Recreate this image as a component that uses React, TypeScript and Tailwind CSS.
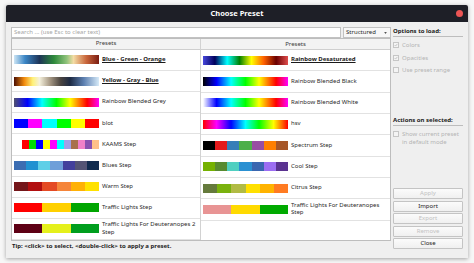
import type { ReactNode } from 'react'

type Preset = {
  name: string
  bold?: boolean
  grad?: string
  steps?: string[]
  narrow?: boolean
}

const leftPresets: Preset[] = [
  {
    name: 'Blue - Green - Orange',
    bold: true,
    grad: 'bg-[linear-gradient(to_right,#cde5f4,#3b86c6_13%,#1d3457_30%,#2e8a3b_47%,#90c37b_62%,#f3dca4_70%,#c9663b_85%,#7a1c12)]',
  },
  {
    name: 'Yellow - Gray - Blue',
    bold: true,
    grad: 'bg-[linear-gradient(to_right,#4a0e02,#f28a0c_12%,#fff27a_22%,#f4f0dc_30%,#a89a86_42%,#4a4440_55%,#1d2a44_66%,#5c7fb0_82%,#d6eaf8)]',
  },
  {
    name: 'Rainbow Blended Grey',
    grad: 'bg-[linear-gradient(to_right,#505070,#0000ff_16%,#00ffff_33%,#00ff00_50%,#ffff00_66%,#ff0000_86%,#ff00ff)]',
  },
  {
    name: 'blot',
    steps: ['bg-[#0000ff]', 'bg-[#ff00ff]', 'bg-[#00ffff]', 'bg-[#00ff00]', 'bg-[#ffff00]', 'bg-[#ff0000]'],
  },
  {
    name: 'KAAMS Step',
    narrow: true,
    steps: [
      'bg-[#ff0000]',
      'bg-[#00e000]',
      'bg-[#0000ff]',
      'bg-[#ffff00]',
      'bg-[#ff00ff]',
      'bg-[#00ffff]',
      'bg-[#a0a0e8]',
      'bg-[#a8704c]',
      'bg-[#f080c8]',
      'bg-[#8a50b0]',
      'bg-[#ffc088]',
    ],
  },
  {
    name: 'Blues Step',
    steps: ['bg-[#3c6db2]', 'bg-[#2191d1]', 'bg-[#5fcfe7]', 'bg-[#6f9fd9]', 'bg-[#43409c]', 'bg-[#545475]', 'bg-[#102a4e]'],
  },
  {
    name: 'Warm Step',
    steps: ['bg-[#74161a]', 'bg-[#b20f10]', 'bg-[#e44a24]', 'bg-[#f5853a]', 'bg-[#ffb106]', 'bg-[#ffe100]'],
  },
  {
    name: 'Traffic Lights Step',
    steps: ['bg-[#ff0000]', 'bg-[#ffd000]', 'bg-[#00a500]'],
  },
  {
    name: 'Traffic Lights For Deuteranopes 2 Step',
    steps: ['bg-[#5e0015]', 'bg-[#e5f01c]', 'bg-[#009e1e]'],
  },
]

const rightPresets: Preset[] = [
  {
    name: 'Rainbow Desaturated',
    bold: true,
    grad: 'bg-[linear-gradient(to_right,#4747db,#00005c_14%,#00ffff_28.5%,#008000_43%,#ffff00_57%,#ff6100_71.5%,#6b0000_86%,#e04d4d)]',
  },
  {
    name: 'Rainbow Blended Black',
    grad: 'bg-[linear-gradient(to_right,#000000,#0000ff_16%,#00ffff_33%,#00ff00_50%,#ffff00_66%,#ff0000_86%,#ff00ff)]',
  },
  {
    name: 'Rainbow Blended White',
    grad: 'bg-[linear-gradient(to_right,#ffffff,#0000ff_16%,#00ffff_33%,#00ff00_50%,#ffff00_66%,#ff0000_86%,#ff00ff)]',
  },
  {
    name: 'hsv',
    grad: 'bg-[linear-gradient(to_right,#ff0000,#ff00ff_16%,#0000ff_33%,#00ffff_50%,#00ff00_66%,#ffff00_83%,#ff0000)]',
  },
  {
    name: 'Spectrum Step',
    steps: ['bg-[#000000]', 'bg-[#e41a1c]', 'bg-[#377eb8]', 'bg-[#4daf4a]', 'bg-[#984ea3]', 'bg-[#ff7f00]', 'bg-[#a65628]'],
  },
  {
    name: 'Cool Step',
    steps: ['bg-[#75b101]', 'bg-[#588a30]', 'bg-[#50cfc0]', 'bg-[#2a90d2]', 'bg-[#3a66b0]', 'bg-[#9c6df2]', 'bg-[#5a3290]'],
  },
  {
    name: 'Citrus Step',
    steps: ['bg-[#657a3c]', 'bg-[#7ab20e]', 'bg-[#b1bb44]', 'bg-[#ffe000]', 'bg-[#ffb300]', 'bg-[#ff7b22]'],
  },
  {
    name: 'Traffic Lights For Deuteranopes Step',
    steps: ['bg-[#e89494]', 'bg-[#ffda00]', 'bg-[#00aa00]'],
  },
]

function Bar({ p }: { p: Preset }) {
  if (p.grad) return <div className={`w-[85px] h-[9px] shrink-0 ${p.grad}`} />
  return (
    <div className="w-[85px] h-[9px] shrink-0 flex justify-end">
      <div className={`flex h-full ${p.narrow ? 'w-[77px]' : 'w-full'}`}>
        {p.steps!.map((c, i) => (
          <div key={i} className={`flex-1 h-full ${c}`} />
        ))}
      </div>
    </div>
  )
}

function Row({ p }: { p: Preset }) {
  return (
    <div className="h-[21.33px] flex items-center gap-[3px] pl-[2px] pr-[1px] border-b border-[#e2e2e2]">
      <Bar p={p} />
      <span
        className={`leading-[7.5px] ${p.bold ? 'font-bold underline underline-offset-1 text-[#1a1a1a]' : 'text-[#2a2a2a]'}`}
      >
        {p.name}
      </span>
    </div>
  )
}

function Column({ items, className }: { items: Preset[]; className?: string }) {
  return (
    <div className={`flex flex-col ${className ?? ''}`}>
      <div className="h-[11px] flex items-center justify-center bg-[#f3f3f3] border-b border-[#cfcfcf] text-[#3c3c3c]">
        Presets
      </div>
      {items.map((p) => (
        <Row key={p.name} p={p} />
      ))}
    </div>
  )
}

function Check({ checked, children }: { checked?: boolean; children: ReactNode }) {
  return (
    <div className="flex items-start gap-[3px] text-[#b4b4b4] leading-[8px]">
      <div className="w-[6px] h-[6px] mt-[1px] shrink-0 border border-[#c6c6c6] bg-[#f4f4f4] flex items-center justify-center">
        {checked && (
          <svg viewBox="0 0 6 6" className="w-[6px] h-[6px]">
            <path d="M1 3.2 L2.4 4.6 L5 1.4" fill="none" stroke="#a8a8a8" strokeWidth="0.9" />
          </svg>
        )}
      </div>
      <span>{children}</span>
    </div>
  )
}

function Btn({ label, disabled }: { label: string; disabled?: boolean }) {
  return (
    <div
      className={`h-[11px] flex items-center justify-center rounded-[1px] border border-[#c4c4c4] bg-[linear-gradient(#fbfbfb,#f0f0f0)] ${
        disabled ? 'text-[#c2c2c2]' : 'text-[#222]'
      }`}
    >
      {label}
    </div>
  )
}

export default function App() {
  return (
    <div className="w-[474px] h-[263px] bg-[#f7f7f7] pl-[6px] pt-[5px] font-['Noto_Sans',sans-serif] text-[6px]">
      <div className="w-[462px] h-[253px] bg-[#efefef] flex flex-col shadow-[0_1px_4px_rgba(0,0,0,0.35)]">
        <div className="h-[17px] bg-[#1e1f27] relative flex items-center justify-center rounded-t-[2px]">
          <span className="text-white font-bold text-[7.5px]">Choose Preset</span>
          <div className="absolute right-[5px] top-[5px] w-[7px] h-[7px] rounded-full bg-[#ec5555]" />
        </div>

        <div className="flex gap-[2px] pl-[5px] pt-[5px]">
          <div className="w-[380px] flex flex-col">
            <div className="flex gap-[2px] h-[11px]">
              <div className="w-[330px] h-full bg-white border border-[#c2c2c2] flex items-center px-[2px] text-[#a6a6a6]">
                Search ... (use Esc to clear text)
              </div>
              <div className="flex-1 h-full border border-[#c2c2c2] bg-[#f7f7f7] flex items-center justify-between pl-[2px] pr-[3px] text-[#2a2a2a]">
                <span>Structured</span>
                <svg viewBox="0 0 4 3" className="w-[3px] h-[2px]">
                  <path d="M0 0 L4 0 L2 3 Z" fill="#555" />
                </svg>
              </div>
            </div>

            <div className="h-[203px] bg-white border border-[#bdbdbd] flex">
              <Column items={leftPresets} className="w-[189px] border-r border-[#d2d2d2]" />
              <Column items={rightPresets} className="flex-1" />
            </div>

            <div className="h-[11px] flex items-center pl-[1px] font-bold text-[#1c1c1c]">
              Tip: &lt;click&gt; to select, &lt;double-click&gt; to apply a preset.
            </div>
          </div>

          <div className="w-[70px] flex flex-col">
            <div className="font-bold text-[#1c1c1c] pt-[1px] pb-[1px] border-b border-[#bdbdbd] leading-[7px]">
              Options to load:
            </div>
            <div className="flex flex-col gap-[4.5px] mt-[4px]">
              <Check checked>Colors</Check>
              <Check checked>Opacities</Check>
              <Check>Use preset range</Check>
            </div>

            <div className="mt-[43px] font-bold text-[#1c1c1c] pb-[1px] border-b border-[#bdbdbd] leading-[7px]">
              Actions on selected:
            </div>
            <div className="mt-[4px]">
              <Check>
                Show current preset
                <br />
                in default mode
              </Check>
            </div>

            <div className="mt-[42px] flex flex-col gap-[1.5px]">
              <Btn label="Apply" disabled />
              <Btn label="Import" />
              <Btn label="Export" disabled />
              <Btn label="Remove" disabled />
              <Btn label="Close" />
            </div>
          </div>
        </div>
      </div>
    </div>
  )
}
